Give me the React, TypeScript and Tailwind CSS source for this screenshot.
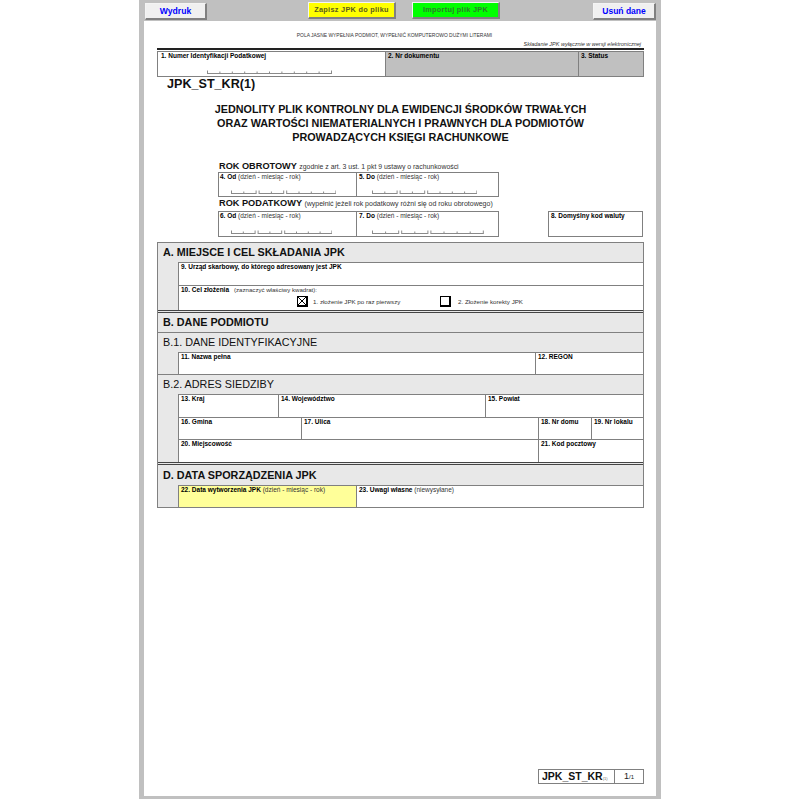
import React from 'react';

const FONT = "font-['Liberation_Sans',Arial,sans-serif]";

// comb of tick marks under date and number fields
function Comb({ groups, cell, gap = 3 }: { groups: number[]; cell: number; gap?: number }) {
  const total = groups.reduce((s, g) => s + g * cell, 0) + gap * (groups.length - 1);
  let x = 0.5;
  const parts: React.ReactNode[] = [];
  groups.forEach((g, i) => {
    const w = g * cell;
    const ticks = [];
    for (let t = 0; t <= g; t++) ticks.push(`M${x + t * cell} ${t === 0 || t === g ? 0.5 : 1.5}V4`);
    parts.push(<path key={i} d={`M${x} 3.5H${x + w} ${ticks.join(' ')}`} stroke="#8a8a8a" strokeWidth="1" fill="none" />);
    x += w + gap;
  });
  return (
    <svg width={total + 1} height="5" className="block">
      {parts}
    </svg>
  );
}

function Label({ n, hint }: { n: string; hint?: string }) {
  return (
    <div className="text-[6.5px] leading-[8px] font-bold text-black whitespace-nowrap">
      {n}
      {hint && <span className="font-normal text-[#333]"> {hint}</span>}
    </div>
  );
}

function Button({ children, className }: { children: React.ReactNode; className: string }) {
  return (
    <button className={`h-[17px] border-t border-l border-t-[#f4f4f4] border-l-[#f4f4f4] border-r-2 border-b-2 border-r-[#808080] border-b-[#808080] font-bold flex items-center justify-center ${className}`}>
      {children}
    </button>
  );
}

function Cell({ className = '', children }: { className?: string; children?: React.ReactNode }) {
  return <div className={`pl-[2px] border-r border-[#808080] last:border-r-0 ${className}`}>{children}</div>;
}

function Row({ className = '', children }: { className?: string; children: React.ReactNode }) {
  return <div className={`ml-[20px] flex bg-white border-l border-t border-[#808080] ${className}`}>{children}</div>;
}

function Header({ children, className = '' }: { children: React.ReactNode; className?: string }) {
  return <div className={`pl-[5px] flex items-center text-[10.8px] text-[#111] ${className}`}>{children}</div>;
}

function CheckBox({ crossed }: { crossed?: boolean }) {
  return (
    <svg width="11" height="11" viewBox="0 0 11 11" className="block shrink-0">
      <rect x="0.5" y="0.5" width="9" height="9" fill="#fff" stroke="#000" strokeWidth="1" />
      <path d="M0 10H10V0" stroke="#000" strokeWidth="2" fill="none" />
      {crossed && <path d="M1 1L9 9M9 1L1 9" stroke="#000" strokeWidth="1" />}
    </svg>
  );
}

export default function App() {
  return (
    <div className={`flex justify-center bg-white h-[800px] overflow-hidden ${FONT}`}>
      <div className="w-[522px] h-[799px] bg-[#c0c0c0] pl-[5px] pr-[5px] flex flex-col">
        {/* toolbar */}
        <div className="h-[21px] shrink-0 flex items-start">
          <Button className="mt-[3px] ml-[1px] w-[62px] bg-[#f0f0f0] text-[#0000ff] text-[8.6px]">Wydruk</Button>
          <Button className="mt-[2px] ml-[101px] w-[88px] bg-[#ffff00] text-[#5a5a1e] text-[7.3px] tracking-[0.3px]">Zapisz JPK do pliku</Button>
          <Button className="mt-[2px] ml-[16px] w-[88px] bg-[#00ff00] text-[#2e7a2e] text-[7.3px] tracking-[0.3px]">Importuj plik JPK</Button>
          <Button className="mt-[3px] ml-auto w-[63px] bg-[#f0f0f0] text-[#0000ff] text-[8.5px]">Usuń dane</Button>
        </div>

        {/* page */}
        <div className="flex-1 bg-white pl-[13px] pr-[12px] mb-[3px] flex flex-col">
          <div className="mt-[11px] h-[7px] text-center text-[4.95px] leading-[7px] text-[#333] pr-[12px]">
            POLA JASNE WYPEŁNIA PODMIOT, WYPEŁNIĆ KOMPUTEROWO DUŻYMI LITERAMI
          </div>
          <div className="mt-[2px] h-[7px] text-right text-[5.5px] leading-[7px] italic text-[#333] pr-[3px]">
            Składanie JPK wyłącznie w wersji elektronicznej
          </div>
          <div className="h-[2px] bg-[#222]" />

          <div className="mt-[1px] flex h-[26px] border border-[#808080]">
            <div className="w-[227px] bg-white pl-[3px] flex flex-col">
              <Label n="1. Numer Identyfikacji Podatkowej" />
              <div className="mt-auto ml-[46px] mb-[1px]">
                <Comb groups={[10]} cell={12.4} />
              </div>
            </div>
            <div className="w-[193px] bg-[#c0c0c0] border-l border-[#808080] pl-[2px]">
              <Label n="2. Nr dokumentu" />
            </div>
            <div className="flex-1 bg-[#c0c0c0] border-l border-[#808080] pl-[2px]">
              <Label n="3. Status" />
            </div>
          </div>

          <div className="ml-[10px] text-[12.6px] leading-[15px] font-bold text-[#111]">JPK_ST_KR(1)</div>

          <div className="mt-[10px] text-center text-[10.8px] leading-[14px] font-bold text-[#111]">
            <div>JEDNOLITY PLIK KONTROLNY DLA EWIDENCJI ŚRODKÓW TRWAŁYCH</div>
            <div>ORAZ WARTOŚCI NIEMATERIALNYCH I PRAWNYCH DLA PODMIOTÓW</div>
            <div>PROWADZĄCYCH KSIĘGI RACHUNKOWE</div>
          </div>

          <div className="mt-[16px] ml-[62px] h-[12px] leading-[12px] text-[9.2px] font-bold text-[#111] whitespace-nowrap">
            ROK OBROTOWY <span className="font-normal text-[6.9px] text-[#333]">zgodnie z art. 3 ust. 1 pkt 9 ustawy o rachunkowości</span>
          </div>
          <div className="ml-[61px] w-[281px] h-[25px] flex border border-[#808080]">
            <div className="w-[138px] border-r border-[#808080] pl-[1px] flex flex-col">
              <Label n="4. Od" hint="(dzień - miesiąc - rok)" />
              <div className="mt-auto ml-[11px] mb-[1px]"><Comb groups={[2, 2, 4]} cell={12.3} gap={3} /></div>
            </div>
            <div className="flex-1 pl-[2px] flex flex-col">
              <Label n="5. Do" hint="(dzień - miesiąc - rok)" />
              <div className="mt-auto ml-[13px] mb-[1px]"><Comb groups={[2, 2, 4]} cell={12.3} gap={3} /></div>
            </div>
          </div>

          <div className="ml-[62px] h-[13px] leading-[13px] text-[9.2px] font-bold text-[#111] whitespace-nowrap">
            ROK PODATKOWY <span className="font-normal text-[7px] text-[#333]">(wypełnić jeżeli rok podatkowy różni się od roku obrotowego)</span>
          </div>
          <div className="mt-[1px] flex">
            <div className="ml-[61px] w-[281px] h-[26px] flex border border-[#808080]">
              <div className="w-[138px] border-r border-[#808080] pl-[1px] flex flex-col">
                <Label n="6. Od" hint="(dzień - miesiąc - rok)" />
                <div className="mt-auto ml-[11px] mb-[1px]"><Comb groups={[2, 2, 4]} cell={11.8} gap={3} /></div>
              </div>
              <div className="flex-1 pl-[2px] flex flex-col">
                <Label n="7. Do" hint="(dzień - miesiąc - rok)" />
                <div className="mt-auto ml-[13px] mb-[1px]"><Comb groups={[2, 2, 4]} cell={13.1} gap={3} /></div>
              </div>
            </div>
            <div className="ml-[49px] w-[95px] h-[26px] border border-[#808080] pl-[2px]">
              <Label n="8. Domyślny kod waluty" />
            </div>
          </div>

          {/* form sections */}
          <div className="mt-[5px] border border-[#808080] bg-[#e8e8e8]">
            <Header className="h-[19px] font-bold">A. MIEJSCE I CEL SKŁADANIA JPK</Header>
            <Row className="h-[23px]"><Cell className="flex-1"><Label n="9. Urząd skarbowy, do którego adresowany jest JPK" /></Cell></Row>
            <Row className="h-[25px]">
              <div className="flex-1 pl-[2px]">
                <div className="text-[6.5px] leading-[8px] font-bold text-black whitespace-nowrap">
                  10. Cel złożenia<span className="ml-[5px] font-normal text-[6.1px] text-[#333]">(zaznaczyć właściwy kwadrat):</span>
                </div>
                <div className="flex items-center mt-[2px] text-[6.2px] text-[#333] whitespace-nowrap">
                  <div className="ml-[116px]"><CheckBox crossed /></div>
                  <span className="ml-[5px] w-[127px]">1. złożenie JPK po raz pierwszy</span>
                  <CheckBox />
                  <span className="ml-[7px]">2. Złożenie korekty JPK</span>
                </div>
              </div>
            </Row>
            <div className="border-t-[3px] border-double border-[#444]" />
            <Header className="h-[19px] font-bold">B. DANE PODMIOTU</Header>
            <Header className="h-[20px] border-t border-[#808080]">B.1. DANE IDENTYFIKACYJNE</Header>
            <Row className="h-[22px]">
              <Cell className="w-[357px]"><Label n="11. Nazwa pełna" /></Cell>
              <Cell className="flex-1"><Label n="12. REGON" /></Cell>
            </Row>
            <Header className="h-[20px] border-t border-[#808080]">B.2. ADRES SIEDZIBY</Header>
            <Row className="h-[23px]">
              <Cell className="w-[100px]"><Label n="13. Kraj" /></Cell>
              <Cell className="w-[207px]"><Label n="14. Województwo" /></Cell>
              <Cell className="flex-1"><Label n="15. Powiat" /></Cell>
            </Row>
            <Row className="h-[22px]">
              <Cell className="w-[123px]"><Label n="16. Gmina" /></Cell>
              <Cell className="w-[237px]"><Label n="17. Ulica" /></Cell>
              <Cell className="w-[53px]"><Label n="18. Nr domu" /></Cell>
              <Cell className="flex-1"><Label n="19. Nr lokalu" /></Cell>
            </Row>
            <Row className="h-[23px]">
              <Cell className="w-[360px]"><Label n="20. Miejscowość" /></Cell>
              <Cell className="flex-1"><Label n="21. Kod pocztowy" /></Cell>
            </Row>
            <div className="border-t-[3px] border-double border-[#444]" />
            <Header className="h-[20px] font-bold">D. DATA SPORZĄDZENIA JPK</Header>
            <Row className="h-[22px]">
              <Cell className="w-[178px] bg-[#ffff99]"><Label n="22. Data wytworzenia JPK" hint="(dzień - miesiąc - rok)" /></Cell>
              <Cell className="flex-1"><Label n="23. Uwagi własne" hint="(niewysyłane)" /></Cell>
            </Row>
          </div>

          {/* footer */}
          <div className="mt-auto mb-[12px] self-end w-[106px] h-[15px] border border-[#808080] flex items-center">
            <div className="w-[76px] h-full border-r border-[#808080] pl-[3px] text-[10.5px] leading-[13px] font-bold text-[#111] whitespace-nowrap">
              JPK_ST_KR<span className="font-normal text-[4px] text-[#666]">(1)</span>
            </div>
            <div className="flex-1 text-center text-[9px] leading-[13px] text-[#222]">
              1<span className="text-[6px]">/1</span>
            </div>
          </div>
        </div>
      </div>
    </div>
  );
}
